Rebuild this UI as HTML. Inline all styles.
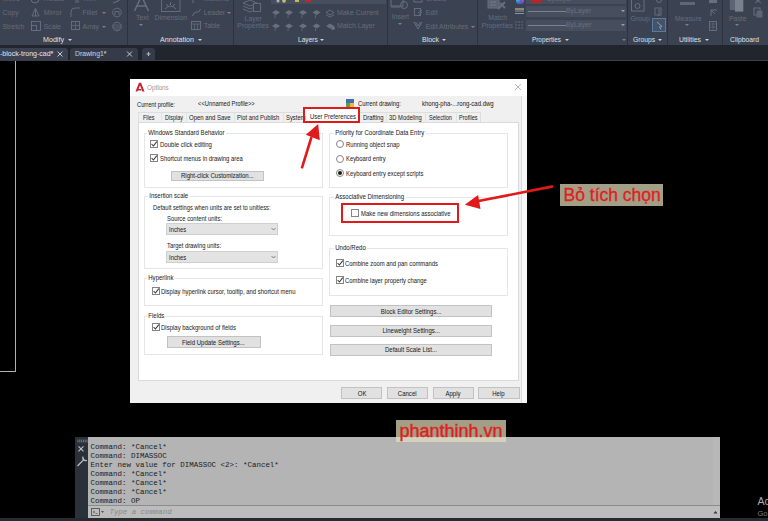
<!DOCTYPE html>
<html><head><meta charset="utf-8">
<style>
*{margin:0;padding:0;box-sizing:border-box}
html,body{width:768px;height:521px;overflow:hidden;background:#000;font-family:"Liberation Sans",sans-serif}
.a{position:absolute;white-space:nowrap}
.rt{position:absolute;white-space:nowrap;font-size:6.9px;color:#646c7b;line-height:8px}
.lbl{position:absolute;white-space:nowrap;font-size:7.3px;color:#dde1e8;line-height:8px;top:36px}
.dd{position:absolute;width:0;height:0;border-left:2px solid transparent;border-right:2px solid transparent;border-top:2.6px solid #d0d4dc}
.ddim{position:absolute;width:0;height:0;border-left:2px solid transparent;border-right:2px solid transparent;border-top:2.5px solid #7c8390}
.sep{position:absolute;top:0;width:1px;height:45px;background:#2d333e}
.tt{position:absolute;font-size:7px;color:#d6dae0;-webkit-text-stroke:0.1px #d6dae0;line-height:8px;top:50px;white-space:nowrap}
.d{position:absolute;white-space:nowrap;font-size:7.2px;color:#1a1a1a;line-height:8px;transform:scaleX(.84);transform-origin:0 50%;-webkit-text-stroke:0.03px #1a1a1a}
.grp{position:absolute;border:1px solid #e6e6e6}
.cb{position:absolute;width:8px;height:8px;border:1px solid #858585;background:#fff}
.rb{position:absolute;width:8px;height:8px;border:1px solid #858585;border-radius:50%;background:#fff}
.btn{position:absolute;background:#e1e1e1;border:1px solid #c2c2c2}
.red{position:absolute;border:2.6px solid #e01a1a}
.ct{position:absolute;font-family:"Liberation Mono",monospace;font-size:7.47px;color:#202020;line-height:9px;white-space:pre}
</style></head><body>
<div class="a" style="left:0px;top:0px;width:768px;height:45px;background:#3b4352;"></div>
<div class="sep" style="left:127px"></div>
<div class="sep" style="left:233px"></div>
<div class="sep" style="left:387px"></div>
<div class="sep" style="left:477px"></div>
<div class="sep" style="left:627px"></div>
<div class="sep" style="left:667px"></div>
<div class="sep" style="left:722px"></div>
<div class="rt" style="left:3px;top:-4.6px;">Move</div>
<div class="rt" style="left:43.7px;top:-4.6px;">Rotate</div>
<div class="rt" style="left:82.6px;top:-4.6px;">Trim</div>
<div class="rt" style="left:2.5px;top:8.6px;">Copy</div>
<div class="rt" style="left:43.7px;top:8.6px;">Mirror</div>
<div class="rt" style="left:82.6px;top:8.6px;">Fillet</div>
<div class="rt" style="left:2.5px;top:22.6px;">Stretch</div>
<div class="rt" style="left:43.7px;top:22.6px;">Scale</div>
<div class="rt" style="left:82.6px;top:22.6px;">Array</div>
<div class="ddim" style="left:102px;top:11.5px"></div>
<div class="ddim" style="left:102px;top:25.5px"></div>
<div class="lbl" style="left:43px;font-size:7.1px;transform:scaleX(1.004);transform-origin:0 50%">Modify</div><div class="dd" style="left:68px;top:38.7px"></div>
<div class="rt" style="left:136px;top:14.2px;">Text</div>
<div class="ddim" style="left:139px;top:23.5px"></div>
<div class="rt" style="left:154.6px;top:14.2px;">Dimension</div>
<div class="rt" style="left:203.7px;top:-4.6px;">Multiline</div>
<div class="rt" style="left:203.7px;top:8.6px;">Leader</div>
<div class="ddim" style="left:227px;top:11.5px"></div>
<div class="rt" style="left:203.7px;top:22.4px;">Table</div>
<div class="lbl" style="left:159.7px;font-size:7.1px;transform:scaleX(1.002);transform-origin:0 50%">Annotation</div><div class="dd" style="left:197.5px;top:38.7px"></div>
<div class="rt" style="left:244.6px;top:15.2px;">Layer</div>
<div class="rt" style="left:237.3px;top:22.4px;">Properties</div>
<div class="a" style="left:270.6px;top:-2px;width:115.4px;height:6px;background:#474f5e;"></div>
<div class="rt" style="left:337px;top:8.9px;">Make Current</div>
<div class="rt" style="left:337px;top:22.4px;">Match Layer</div>
<div class="lbl" style="left:297.7px;font-size:7.1px;transform:scaleX(0.929);transform-origin:0 50%">Layers</div><div class="dd" style="left:319.7px;top:38.7px"></div>
<div class="rt" style="left:391.8px;top:13.4px;">Insert</div>
<div class="ddim" style="left:398px;top:23px"></div>
<div class="rt" style="left:425.7px;top:-4.6px;">Create</div>
<div class="rt" style="left:425.7px;top:8.6px;">Edit</div>
<div class="rt" style="left:425.7px;top:22.6px;">Edit Attributes</div>
<div class="ddim" style="left:471px;top:25.5px"></div>
<div class="lbl" style="left:421.5px;font-size:7.1px;transform:scaleX(0.979);transform-origin:0 50%">Block</div><div class="dd" style="left:441.5px;top:38.7px"></div>
<div class="rt" style="left:488.3px;top:13.9px;">Match</div>
<div class="rt" style="left:481.6px;top:22.4px;">Properties</div>
<div class="a" style="left:526.4px;top:-6px;width:99.4px;height:9.6px;background:#474f5e;"></div>
<div class="a" style="left:532px;top:-3px;width:10px;height:6px;background:#b82428;"></div>
<div class="a" style="left:516px;top:-3px;width:7.5px;height:7px;border-radius:50%;background:conic-gradient(#d04040,#9050c0,#4060d0,#40a0d0,#d04040)"></div>
<div class="rt" style="left:547px;top:-4.6px;">ByLayer</div>
<div class="a" style="left:526.4px;top:6px;width:99.4px;height:11px;background:#474f5e;"></div>
<div class="a" style="left:528px;top:11px;width:37.6px;height:1px;background:#7a8190;"></div>
<div class="rt" style="left:566px;top:7.4px;color:#687080">ByLayer</div>
<div class="ddim" style="left:621px;top:10px;border-top-color:#9aa1ad"></div>
<div class="a" style="left:526.4px;top:19.8px;width:99.4px;height:11px;background:#474f5e;"></div>
<div class="a" style="left:528px;top:24.8px;width:37.6px;height:1px;background:#7a8190;"></div>
<div class="rt" style="left:566px;top:21.2px;color:#687080">ByLayer</div>
<div class="ddim" style="left:621px;top:23.8px;border-top-color:#9aa1ad"></div>
<div class="lbl" style="left:532px;font-size:7.1px;transform:scaleX(0.896);transform-origin:0 50%">Properties</div><div class="dd" style="left:564.5px;top:38.7px"></div>
<div class="ddim" style="left:622px;top:38.5px"></div>
<div class="rt" style="left:630.6px;top:14.7px;">Group</div>
<div class="a" style="left:651.8px;top:18.3px;width:14.5px;height:13.5px;background:#44536a;border:1px solid #5a7ba0"></div>
<div class="lbl" style="left:632.5px;font-size:7.1px;transform:scaleX(0.945);transform-origin:0 50%">Groups</div><div class="dd" style="left:657.5px;top:38.7px"></div>
<div class="a" style="left:679.7px;top:1.5px;width:15.3px;height:3px;background:#606878;"></div>
<div class="rt" style="left:675px;top:14.7px;">Measure</div>
<div class="ddim" style="left:685px;top:23.5px"></div>
<div class="lbl" style="left:678.8px;font-size:7.1px;transform:scaleX(0.962);transform-origin:0 50%">Utilities</div><div class="dd" style="left:704.7px;top:38.7px"></div>
<div class="rt" style="left:729px;top:14.7px;">Paste</div>
<div class="ddim" style="left:735px;top:23.5px"></div>
<div class="lbl" style="left:729.8px;font-size:7.1px;transform:scaleX(0.954);transform-origin:0 50%">Clipboard</div><div class="dd" style="left:768px;top:38.7px"></div>
<svg class="a" style="left:0;top:0" width="768" height="45" viewBox="0 0 768 45"><circle cx="35" cy="-1" r="4" fill="none" stroke="#687080" stroke-width="1"/><path d="M32 16 L35.5 8.5 L39 16 Z M35.5 8.5 V16" fill="none" stroke="#687080" stroke-width="0.9"/><rect x="31.5" y="21.5" width="9" height="9" fill="none" stroke="#687080" stroke-width="0.9"/><rect x="31.5" y="25.5" width="5" height="5" fill="none" stroke="#687080" stroke-width="0.9"/><path d="M71 17 V12 Q71 8 75 8 H80" fill="none" stroke="#687080" stroke-width="0.9"/><rect x="71.5" y="21.5" width="8" height="8" fill="none" stroke="#687080" stroke-width="0.9"/><path d="M71.5 25.5 H79.5 M75.5 21.5 V29.5" stroke="#687080" stroke-width="0.7"/><path d="M76 0 V3 M78 0 V3" stroke="#687080" stroke-width="1"/><circle cx="117" cy="12.5" r="4.3" fill="none" stroke="#687080" stroke-width="0.9"/><path d="M115 15 V11.5 H119 V15" fill="none" stroke="#687080" stroke-width="0.9"/><circle cx="117" cy="26.5" r="4.3" fill="none" stroke="#687080" stroke-width="0.9"/><path d="M113 25 H121 M113 27 H121 M114 29 H120" stroke="#687080" stroke-width="0.7"/><path d="M113 3 Q118 2 121 -2" fill="none" stroke="#687080" stroke-width="1.2"/><path d="M134.5 11 L141.5 -4 L148.5 11 M137 6 H146" fill="none" stroke="#687080" stroke-width="1.5"/><rect x="161.5" y="-3" width="18.5" height="14.5" fill="none" stroke="#687080" stroke-width="0.9"/><path d="M165 9 Q170.5 3 176 9 M170.5 2 V5 M166 4 L168 6 M175 4 L173 6" fill="none" stroke="#687080" stroke-width="1"/><path d="M193 0 V3" stroke="#687080" stroke-width="1"/><path d="M192.5 16 Q194 11 197 12 Q199 13 200.5 9" fill="none" stroke="#687080" stroke-width="1"/><rect x="191.5" y="21.5" width="9" height="8" fill="none" stroke="#687080" stroke-width="0.9"/><path d="M191.5 24 H200.5 M194.5 24 V29.5 M197.5 24 V29.5" stroke="#687080" stroke-width="0.7"/><path d="M243 3 L250 0 L257 3 L250 6 Z M243 6 L250 9 L257 6 M243 9 L250 12 L257 9" fill="none" stroke="#687080" stroke-width="0.9"/><rect x="253.5" y="3.5" width="7" height="8" fill="#3b4352" stroke="#687080" stroke-width="0.9"/><circle cx="278" cy="1" r="1.5" fill="#a9b0bb"/><circle cx="284" cy="1" r="1.8" fill="#c8c070"/><rect x="295" y="-2" width="4" height="4" fill="#c8b45a"/><rect x="305" y="-2" width="6" height="4" fill="#c0282a"/><path d="M272 12.5 L276 10 L280 12.5 L276 15 Z" fill="#687080"/><path d="M275 15 V18" stroke="#687080" stroke-width="0.8"/><path d="M272 26 L276 23.5 L280 26 L276 28.5 Z" fill="#687080"/><path d="M275 28.5 V31" stroke="#687080" stroke-width="0.8"/><path d="M285 12.5 L289 10 L293 12.5 L289 15 Z" fill="#687080"/><path d="M288 15 V18" stroke="#687080" stroke-width="0.8"/><path d="M285 26 L289 23.5 L293 26 L289 28.5 Z" fill="#687080"/><path d="M288 28.5 V31" stroke="#687080" stroke-width="0.8"/><path d="M299 12.5 L303 10 L307 12.5 L303 15 Z" fill="#687080"/><path d="M302 15 V18" stroke="#687080" stroke-width="0.8"/><path d="M299 26 L303 23.5 L307 26 L303 28.5 Z" fill="#687080"/><path d="M302 28.5 V31" stroke="#687080" stroke-width="0.8"/><path d="M312.5 12.5 L316.5 10 L320.5 12.5 L316.5 15 Z" fill="#687080"/><path d="M315.5 15 V18" stroke="#687080" stroke-width="0.8"/><path d="M312.5 26 L316.5 23.5 L320.5 26 L316.5 28.5 Z" fill="#687080"/><path d="M315.5 28.5 V31" stroke="#687080" stroke-width="0.8"/><path d="M326 12.5 L330 10 L334 12.5 L330 15 Z M326 15 L330 17 L334 15" fill="none" stroke="#687080" stroke-width="0.9"/><path d="M326 26 L330 23.5 L334 26 L330 28.5 Z" fill="#687080"/><circle cx="333" cy="28" r="2" fill="#687080"/><rect x="391" y="-4" width="12" height="10" fill="none" stroke="#687080" stroke-width="1"/><circle cx="404" cy="5" r="3.5" fill="none" stroke="#687080" stroke-width="1"/><path d="M391 7 H400" stroke="#687080" stroke-width="1"/><rect x="414" y="-3" width="8" height="5" fill="none" stroke="#687080" stroke-width="1"/><rect x="414.5" y="8.5" width="6" height="7" fill="none" stroke="#687080" stroke-width="0.9"/><path d="M418 13 L422 10 M419 15 L422 12" stroke="#687080" stroke-width="0.9"/><path d="M414 22 L418 29 L422 22 M415.5 22 L418 26 L420.5 22" fill="none" stroke="#687080" stroke-width="1"/><rect x="488" y="-4" width="11" height="12" fill="#5a6271" stroke="#687080" stroke-width="1"/><path d="M490 2 H496 M490 5 H496" stroke="#7a8190" stroke-width="0.8"/><path d="M498 9 L505 2 M500 3 L505 8" stroke="#687080" stroke-width="1.8"/><path d="M515 9 H524 M515 11 H524 M515 13.5 H524" stroke="#8c93a0" stroke-width="1"/><path d="M515 9 H524" stroke="#b5a66a" stroke-width="1"/><path d="M515 22 H524 M515 25 H524 M515 28 H524" stroke="#687080" stroke-width="0.9" stroke-dasharray="2 1"/><rect x="631.5" y="-3" width="12.5" height="14" fill="none" stroke="#687080" stroke-width="1"/><circle cx="637.5" cy="6" r="2.5" fill="none" stroke="#687080" stroke-width="1"/><circle cx="659" cy="0" r="2.5" fill="none" stroke="#687080" stroke-width="1"/><rect x="655" y="8" width="6" height="7" fill="none" stroke="#687080" stroke-width="0.9"/><path d="M659 9 V16" stroke="#687080"/><path d="M657 22 L662 26.5 L659.5 27 L661 29.5" fill="none" stroke="#8aa0bc" stroke-width="1"/><path d="M709 -1 H717 V3 H709 Z" fill="#687080"/><path d="M711 10 L715 14 M711 10 V16 M711 10 H717" stroke="#687080" stroke-width="1"/><rect x="709.5" y="21.5" width="7" height="9" fill="none" stroke="#687080" stroke-width="0.9"/><path d="M709.5 24 H716.5 M709.5 27 H716.5 M713 21.5 V30.5" stroke="#687080" stroke-width="0.6"/><rect x="729.8" y="-4" width="9" height="14" fill="#5d6574"/><rect x="735" y="0" width="8.3" height="11.6" fill="#7a818e"/><path d="M755 -1 L761 3 M761 -1 L755 3" stroke="#687080" stroke-width="1"/><rect x="754" y="8" width="6" height="7" fill="none" stroke="#687080"/><rect x="756.5" y="10.5" width="6" height="7" fill="#5d6574"/></svg>
<div class="a" style="left:0px;top:44.7px;width:768px;height:16.3px;background:#21252d;"></div>
<div class="a" style="left:0px;top:59.5px;width:768px;height:1.5px;background:#393e48;"></div>
<div class="a" style="left:0px;top:47.8px;width:68.2px;height:12.2px;background:#3a4150;border-radius:0 3px 0 0"></div>
<div class="a" style="left:69.5px;top:47.8px;width:68.5px;height:12.2px;background:#353b48;border-radius:3px 3px 0 0"></div>
<div class="a" style="left:142.4px;top:47.8px;width:12.5px;height:12.2px;background:#353b48;border-radius:3px 3px 0 0"></div>
<div class="tt" style="left:0">-block-trong-cad*</div>
<div class="tt" style="left:75px;font-size:6.8px;color:#b9bec7">Drawing1*</div>
<svg class="a" style="left:0;top:45px" width="768" height="16" viewBox="0 0 768 16"><path d="M57.5 6.5 L62.5 11.5 M62.5 6.5 L57.5 11.5 M127 6.5 L132 11.5 M132 6.5 L127 11.5" stroke="#c4c9d1" stroke-width="1"/><path d="M148.5 7 V11 M146.5 9 H150.5" stroke="#b4b9c1" stroke-width="1.1"/></svg>
<div class="a" style="left:15px;top:61px;width:1px;height:311px;background:#b0b0b0;"></div>
<div class="a" style="left:0px;top:371px;width:16px;height:1px;background:#b0b0b0;"></div>
<div class="a" style="left:130px;top:79px;width:397px;height:324px;background:#f7f7f7;"></div>
<div class="a" style="left:130px;top:96px;width:391px;height:307px;background:#f0f0f0;"></div>
<div class="a" style="left:521px;top:96px;width:1px;height:307px;background:#dcdcdc;"></div>
<div class="a" style="left:130px;top:79px;width:397px;height:17px;background:#fff;"></div>
<svg class="a" style="left:135px;top:82px" width="10" height="10" viewBox="0 0 10 10"><path d="M0.5 9.5 L4 0.8 L6 0.8 L9.5 9.5 L7.4 9.5 L5 3.2 L3.6 7 L6 7 L6.5 8.6 L2.6 8.6 L2.3 9.5 Z" fill="#c41e2a"/></svg>
<div class="d" style="left:147px;top:83.5px;font-size:7.5px;line-height:8px;color:#a0a0a0">Options</div>
<svg class="a" style="left:514px;top:83px" width="8" height="8" viewBox="0 0 8 8"><path d="M1 1 L7 7 M7 1 L1 7" stroke="#a8a8a8" stroke-width="0.8"/></svg>
<div class="d" style="left:137px;top:100.8px;transform:scaleX(0.798);">Current profile:</div>
<div class="d" style="left:198px;top:100.2px;transform:scaleX(0.807);">&lt;&lt;Unnamed Profile&gt;&gt;</div>
<div class="a" style="left:346px;top:99px;width:8px;height:8px;background:#3d6fb5"></div><div class="a" style="left:350px;top:103px;width:4px;height:4px;background:#f2b630"></div><div class="a" style="left:346px;top:103px;width:4px;height:4px;background:#5aa14a"></div>
<div class="d" style="left:358px;top:99.6px;transform:scaleX(0.808);">Current drawing:</div>
<div class="d" style="left:422px;top:99.6px;transform:scaleX(0.834);">khong-pha-...rong-cad.dwg</div>
<div class="a" style="left:138px;top:112px;width:343px;height:10.5px;background:#f0f0f0;border:1px solid #dedede;border-bottom:none"></div>
<div class="a" style="left:161px;top:112.5px;width:1px;height:10px;background:#e2e2e2;"></div>
<div class="a" style="left:185.7px;top:112.5px;width:1px;height:10px;background:#e2e2e2;"></div>
<div class="a" style="left:234.2px;top:112.5px;width:1px;height:10px;background:#e2e2e2;"></div>
<div class="a" style="left:282.6px;top:112.5px;width:1px;height:10px;background:#e2e2e2;"></div>
<div class="a" style="left:386px;top:112.5px;width:1px;height:10px;background:#e2e2e2;"></div>
<div class="a" style="left:425px;top:112.5px;width:1px;height:10px;background:#e2e2e2;"></div>
<div class="a" style="left:455.5px;top:112.5px;width:1px;height:10px;background:#e2e2e2;"></div>
<div class="a" style="left:137.6px;top:122px;width:381px;height:258.6px;background:#fff;border:1px solid #dadada"></div>
<div class="a" style="left:305px;top:109px;width:55px;height:14px;background:#fff;"></div>
<div class="d" style="left:142.6px;top:113.8px;transform:scaleX(0.750);">Files</div>
<div class="d" style="left:165px;top:113.8px;transform:scaleX(0.762);">Display</div>
<div class="d" style="left:189.2px;top:113.8px;transform:scaleX(0.835);">Open and Save</div>
<div class="d" style="left:237.3px;top:113.8px;transform:scaleX(0.811);">Plot and Publish</div>
<div class="d" style="left:285.7px;top:113.8px;transform:scaleX(0.815);">System</div>
<div class="d" style="left:363px;top:113.8px;transform:scaleX(0.815);">Drafting</div>
<div class="d" style="left:389px;top:113.8px;transform:scaleX(0.810);">3D Modeling</div>
<div class="d" style="left:429px;top:113.8px;transform:scaleX(0.777);">Selection</div>
<div class="d" style="left:459px;top:113.8px;transform:scaleX(0.776);">Profiles</div>
<div class="d" style="left:310px;top:113.3px;transform:scaleX(0.821);">User Preferences</div>
<div class="grp" style="left:144px;top:132.5px;width:178.5px;height:55.1px"></div>
<div class="d" style="left:147.2px;top:128.5px;background:#fff;padding:0 1.5px">Windows Standard Behavior</div>
<div class="cb" style="left:150px;top:140.0px;width:8px;height:8px"><svg width="6" height="6" viewBox="0 0 6 6" style="position:absolute;left:0;top:0"><path d="M0.6 3 L2.4 5 L5.8 0.6" fill="none" stroke="#3a3a3a" stroke-width="1.1"/></svg></div>
<div class="d" style="left:160px;top:140.8px;transform:scaleX(0.839);">Double click editing</div>
<div class="cb" style="left:150px;top:154.0px;width:8px;height:8px"><svg width="6" height="6" viewBox="0 0 6 6" style="position:absolute;left:0;top:0"><path d="M0.6 3 L2.4 5 L5.8 0.6" fill="none" stroke="#3a3a3a" stroke-width="1.1"/></svg></div>
<div class="d" style="left:160px;top:154.8px;transform:scaleX(0.815);">Shortcut menus in drawing area</div>
<div class="btn" style="left:171.2px;top:171px;width:93.2px;height:9.6px"></div>
<div class="a" style="left:171.2px;top:172.2px;width:93.2px;height:8px;text-align:center;font-size:7.2px;line-height:8px;color:#1a1a1a;-webkit-text-stroke:0.03px #1a1a1a"><span style="display:inline-block;transform:scaleX(.84)">Right-click Customization...</span></div>
<div class="grp" style="left:144px;top:196px;width:178.5px;height:73.0px"></div>
<div class="d" style="left:147.5px;top:192.0px;background:#fff;padding:0 1.5px">Insertion scale</div>
<div class="d" style="left:153.3px;top:204.1px;transform:scaleX(0.804);">Default settings when units are set to unitless:</div>
<div class="d" style="left:166.8px;top:215.0px;transform:scaleX(0.815);">Source content units:</div>
<div class="a" style="left:166px;top:223.1px;width:111.6px;height:11.5px;background:#e3e3e3;border:1px solid #cfcfcf"></div>
<div class="d" style="left:168.8px;top:225.7px;transform:scaleX(0.815);">Inches</div>
<svg class="a" style="left:270.6px;top:226.85px" width="5" height="4" viewBox="0 0 5 4"><path d="M0.5 1 L2.5 3 L4.5 1" fill="none" stroke="#555" stroke-width="0.7"/></svg>
<div class="d" style="left:166.8px;top:242.4px;transform:scaleX(0.815);">Target drawing units:</div>
<div class="a" style="left:166px;top:251px;width:111.6px;height:11.5px;background:#e3e3e3;border:1px solid #cfcfcf"></div>
<div class="d" style="left:168.8px;top:253.6px;transform:scaleX(0.815);">Inches</div>
<svg class="a" style="left:270.6px;top:254.75px" width="5" height="4" viewBox="0 0 5 4"><path d="M0.5 1 L2.5 3 L4.5 1" fill="none" stroke="#555" stroke-width="0.7"/></svg>
<div class="grp" style="left:144px;top:277.7px;width:178.5px;height:27.9px"></div>
<div class="d" style="left:147.0px;top:273.7px;background:#fff;padding:0 1.5px">Hyperlink</div>
<div class="cb" style="left:152px;top:287.2px;width:8px;height:8px"><svg width="6" height="6" viewBox="0 0 6 6" style="position:absolute;left:0;top:0"><path d="M0.6 3 L2.4 5 L5.8 0.6" fill="none" stroke="#3a3a3a" stroke-width="1.1"/></svg></div>
<div class="d" style="left:161px;top:288.0px;transform:scaleX(0.827);">Display hyperlink cursor, tooltip, and shortcut menu</div>
<div class="grp" style="left:144px;top:315.5px;width:178.5px;height:39.5px"></div>
<div class="d" style="left:147.0px;top:311.5px;background:#fff;padding:0 1.5px">Fields</div>
<div class="cb" style="left:152px;top:323.1px;width:8px;height:8px"><svg width="6" height="6" viewBox="0 0 6 6" style="position:absolute;left:0;top:0"><path d="M0.6 3 L2.4 5 L5.8 0.6" fill="none" stroke="#3a3a3a" stroke-width="1.1"/></svg></div>
<div class="d" style="left:161px;top:323.9px;transform:scaleX(0.833);">Display background of fields</div>
<div class="btn" style="left:166.8px;top:336.3px;width:94.0px;height:12.2px"></div>
<div class="a" style="left:166.8px;top:338.8px;width:94.0px;height:8px;text-align:center;font-size:7.2px;line-height:8px;color:#1a1a1a;-webkit-text-stroke:0.03px #1a1a1a"><span style="display:inline-block;transform:scaleX(.84)">Field Update Settings...</span></div>
<div class="grp" style="left:329px;top:132.5px;width:179.0px;height:55.7px"></div>
<div class="d" style="left:333.5px;top:128.5px;background:#fff;padding:0 1.5px">Priority for Coordinate Data Entry</div>
<div class="rb" style="left:336px;top:139.9px"></div>
<div class="d" style="left:346px;top:140.7px;transform:scaleX(0.815);">Running object snap</div>
<div class="rb" style="left:336px;top:154.6px"></div>
<div class="d" style="left:346px;top:155.4px;transform:scaleX(0.815);">Keyboard entry</div>
<div class="rb" style="left:336px;top:169.2px"><div style="position:absolute;left:1px;top:1px;width:4px;height:4px;border-radius:50%;background:#1a1a1a"></div></div>
<div class="d" style="left:346px;top:170.0px;transform:scaleX(0.818);">Keyboard entry except scripts</div>
<div class="grp" style="left:329px;top:196.7px;width:179.0px;height:39.1px"></div>
<div class="d" style="left:333.5px;top:192.7px;background:#fff;padding:0 1.5px">Associative Dimensioning</div>
<div class="cb" style="left:351.3px;top:209.2px;width:7.5px;height:7.5px"></div>
<div class="d" style="left:361px;top:209.7px;transform:scaleX(0.824);">Make new dimensions associative</div>
<div class="grp" style="left:329px;top:247.5px;width:179.0px;height:48.2px"></div>
<div class="d" style="left:333.5px;top:243.5px;background:#fff;padding:0 1.5px">Undo/Redo</div>
<div class="cb" style="left:336px;top:259.2px;width:8px;height:8px"><svg width="6" height="6" viewBox="0 0 6 6" style="position:absolute;left:0;top:0"><path d="M0.6 3 L2.4 5 L5.8 0.6" fill="none" stroke="#3a3a3a" stroke-width="1.1"/></svg></div>
<div class="d" style="left:345.3px;top:260.0px;transform:scaleX(0.820);">Combine zoom and pan commands</div>
<div class="cb" style="left:336px;top:276.4px;width:8px;height:8px"><svg width="6" height="6" viewBox="0 0 6 6" style="position:absolute;left:0;top:0"><path d="M0.6 3 L2.4 5 L5.8 0.6" fill="none" stroke="#3a3a3a" stroke-width="1.1"/></svg></div>
<div class="d" style="left:345.3px;top:277.2px;transform:scaleX(0.816);">Combine layer property change</div>
<div class="btn" style="left:330px;top:305.4px;width:161.7px;height:12.0px"></div>
<div class="a" style="left:330px;top:307.8px;width:161.7px;height:8px;text-align:center;font-size:7.2px;line-height:8px;color:#1a1a1a;-webkit-text-stroke:0.03px #1a1a1a"><span style="display:inline-block;transform:scaleX(.84)">Block Editor Settings...</span></div>
<div class="btn" style="left:330px;top:325px;width:161.7px;height:11.8px"></div>
<div class="a" style="left:330px;top:327.3px;width:161.7px;height:8px;text-align:center;font-size:7.2px;line-height:8px;color:#1a1a1a;-webkit-text-stroke:0.03px #1a1a1a"><span style="display:inline-block;transform:scaleX(.84)">Lineweight Settings...</span></div>
<div class="btn" style="left:330px;top:344.2px;width:161.7px;height:11.5px"></div>
<div class="a" style="left:330px;top:346.3px;width:161.7px;height:8px;text-align:center;font-size:7.2px;line-height:8px;color:#1a1a1a;-webkit-text-stroke:0.03px #1a1a1a"><span style="display:inline-block;transform:scaleX(.84)">Default Scale List...</span></div>
<div class="btn" style="left:341.3px;top:387.4px;width:41.0px;height:12.1px"></div>
<div class="a" style="left:341.3px;top:389.8px;width:41.0px;height:8px;text-align:center;font-size:7.2px;line-height:8px;color:#1a1a1a;-webkit-text-stroke:0.03px #1a1a1a"><span style="display:inline-block;transform:scaleX(.84)">OK</span></div>
<div class="btn" style="left:387.3px;top:387.4px;width:40.7px;height:12.1px"></div>
<div class="a" style="left:387.3px;top:389.8px;width:40.7px;height:8px;text-align:center;font-size:7.2px;line-height:8px;color:#1a1a1a;-webkit-text-stroke:0.03px #1a1a1a"><span style="display:inline-block;transform:scaleX(.84)">Cancel</span></div>
<div class="btn" style="left:432.7px;top:387.4px;width:41.0px;height:12.1px"></div>
<div class="a" style="left:432.7px;top:389.8px;width:41.0px;height:8px;text-align:center;font-size:7.2px;line-height:8px;color:#1a1a1a;-webkit-text-stroke:0.03px #1a1a1a"><span style="display:inline-block;transform:scaleX(.84)">Apply</span></div>
<div class="btn" style="left:478px;top:387.4px;width:41.6px;height:12.1px"></div>
<div class="a" style="left:478px;top:389.8px;width:41.6px;height:8px;text-align:center;font-size:7.2px;line-height:8px;color:#1a1a1a;-webkit-text-stroke:0.03px #1a1a1a"><span style="display:inline-block;transform:scaleX(.84)">Help</span></div>
<div class="red" style="left:303.3px;top:107.4px;width:57.2px;height:15.6px"></div>
<div class="red" style="left:340.8px;top:202.7px;width:118.5px;height:20.8px"></div>
<svg class="a" style="left:0;top:0" width="768" height="521" viewBox="0 0 768 521"><path d="M301.8 168.4 L311.5 137" stroke="#e01a1a" stroke-width="2.6" fill="none"/><path d="M318.2 124 L305.8 134.8 L319.8 140.2 Z" fill="#e01a1a"/><path d="M553 186.4 L476 201.5" stroke="#e01a1a" stroke-width="2.6" fill="none"/><path d="M464.8 204.7 L478.1 195 L480.5 209 Z" fill="#e01a1a"/></svg>
<div class="a" style="left:560.2px;top:184.3px;width:102.7px;height:22px;background:#a39e86;"></div>
<div class="a" style="left:563.5px;top:183px;font-size:17.5px;line-height:24px;color:#e0201e;-webkit-text-stroke:0.3px #e0201e">Bỏ tích chọn</div>
<div class="a" style="left:75px;top:437px;width:13.3px;height:81px;background:#2b313b;"></div>
<svg class="a" style="left:75px;top:437px" width="14" height="30" viewBox="0 0 14 30"><path d="M2.5 3.2 H12.5 M2.5 4.8 H12.5" stroke="#9aa0a8" stroke-width="0.9" stroke-dasharray="1 0.8"/><path d="M3.5 9.3 L8.5 14.3 M8.5 9.3 L3.5 14.3" stroke="#c0c4ca" stroke-width="1.1"/><path d="M2.5 29 L8.8 22.7" stroke="#c0c4ca" stroke-width="1.2"/><path d="M8 19.6 A3 3 0 0 0 11.8 23.4" fill="none" stroke="#c0c4ca" stroke-width="1.3"/></svg>
<div class="a" style="left:88.3px;top:437px;width:631.7px;height:81px;background:#b4b4b4;"></div>
<div class="a" style="left:713px;top:437px;width:7px;height:69px;background:#b8b8b8;"></div>
<div class="ct" style="left:90.6px;top:443px">Command: *Cancel*
Command: DIMASSOC
Enter new value for DIMASSOC &lt;2&gt;: *Cancel*
Command: *Cancel*
Command: *Cancel*
Command: *Cancel*
Command: OP</div>
<div class="a" style="left:88.3px;top:505.2px;width:631.7px;height:1.2px;background:#8c8c8c;"></div>
<div class="a" style="left:88.3px;top:506.4px;width:631.7px;height:11.2px;background:#bcbcbc;"></div>
<svg class="a" style="left:90px;top:507px" width="16" height="10" viewBox="0 0 16 10"><rect x="1.5" y="1.5" width="8" height="7" fill="none" stroke="#555" stroke-width="0.9"/><path d="M3 4 L5 5 L3 6 M5.5 6.5 H7.5" stroke="#555" stroke-width="0.7" fill="none"/><path d="M11 4 L14 4 L12.5 6 Z" fill="#555"/></svg>
<div class="a" style="left:109.5px;top:507.5px;font-family:'Liberation Mono',monospace;font-size:7.4px;line-height:9px;color:#8a8a8a;font-style:italic">Type a command</div>
<svg class="a" style="left:712px;top:509px" width="8" height="6" viewBox="0 0 8 6"><path d="M1.5 4.5 L3.5 2 L5.5 4.5 Z" fill="#333"/></svg>
<div class="a" style="left:0px;top:517.6px;width:768px;height:3.4px;background:#252a33;"></div>
<div class="a" style="left:757.5px;top:495px;font-size:10.5px;line-height:12px;color:#ababab">Ac</div>
<div class="a" style="left:757.5px;top:510px;font-size:7.5px;line-height:8px;color:#7e7e7e">Go</div>
<div class="a" style="left:396px;top:420.2px;width:110px;height:16.8px;background:#a39e86;"></div>
<div class="a" style="left:396px;top:437px;width:110px;height:4.8px;background:#d6d1bc;"></div>
<div class="a" style="left:399.4px;top:418.5px;font-size:18px;line-height:24px;color:#e0201e;-webkit-text-stroke:0.4px #e0201e">phanthinh.vn</div>
</body></html>
